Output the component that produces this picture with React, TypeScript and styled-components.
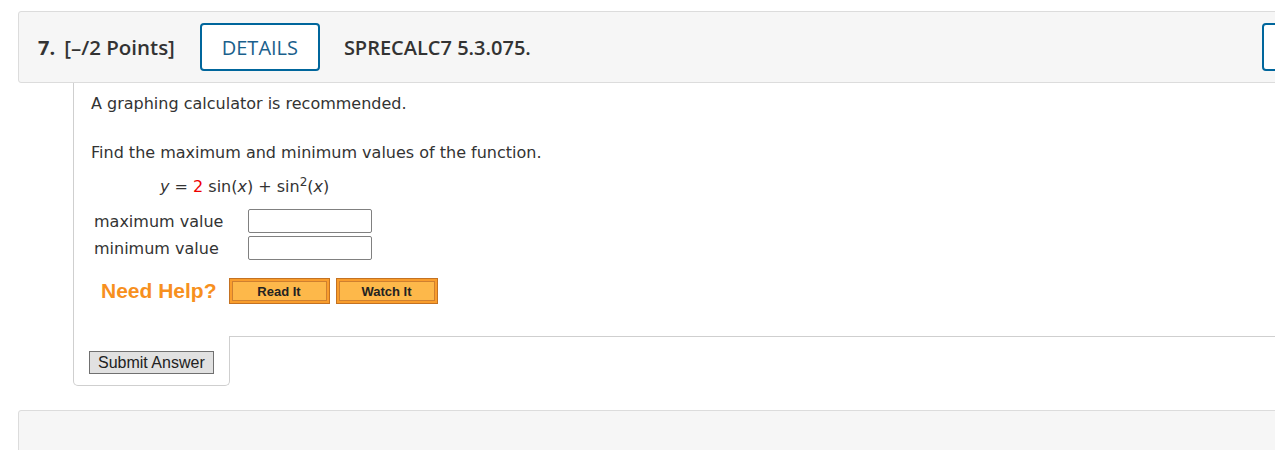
import React from 'react';
import styled, { createGlobalStyle } from 'styled-components';

const GlobalStyle = createGlobalStyle`
  html, body {
    margin: 0;
    padding: 0;
    background: #fff;
    overflow: hidden;
  }
`

const Page = styled.div`
  width: 1400px;
  padding: 11px 0 0 18px;
`

const QuestionHeader = styled.div`
  display: flex;
  align-items: center;
  height: 70px;
  padding-left: 19px;
  background: #f6f6f6;
  border: 1px solid #dcdcdc;
  border-radius: 3px;
  font-family: "Open Sans", sans-serif;
  color: #333;
`

const Number = styled.span`
  font-size: 20px;
  font-weight: 700;
  margin-right: 9px;
`

const Points = styled.span`
  font-size: 20.5px;
  font-weight: 600;
`

const DetailsButton = styled.button<{ $gap?: number; $end?: number }>`
  height: 48px;
  width: 120px;
  margin-left: ${p => p.$gap ?? 25}px;
  margin-right: ${p => p.$end ?? 0}px;
  background: #fff;
  border: 2px solid #00669c;
  border-radius: 4px;
  color: #1a5f8c;
  font-family: "Open Sans", sans-serif;
  font-size: 20px;
  padding: 0;
`

const Source = styled.span`
  margin-left: 24px;
  font-size: 20px;
  font-weight: 600;
`

const Spacer = styled.div`
  flex: 1;
`

const Body = styled.div`
  margin-left: 55px;
  font-family: "DejaVu Sans", Verdana, sans-serif;
  color: #333;
`

const Panel = styled.div`
  border-left: 1px solid #cfcfcf;
  padding: 10px 0 32px 17px;
`

const Para = styled.p<{ $top?: number }>`
  margin: ${p => p.$top ?? 0}px 0 0 0;
  font-size: 16px;
  line-height: 22px;
`

const Formula = styled.div`
  margin: 12px 0 0 69px;
  font-size: 16px;
  line-height: 22px;
  i { font-style: italic; }
  sup { font-size: 0.75em; line-height: 0; }
`

const Red = styled.span`
  color: #e00;
`

const AnswerGrid = styled.div`
  display: grid;
  grid-template-columns: 154px 124px;
  row-gap: 3px;
  margin: 11px 0 0 3px;
  align-items: center;
`

const Label = styled.label`
  font-size: 16px;
  line-height: 24px;
  position: relative;
  top: 1px;
`

const AnswerInput = styled.input`
  box-sizing: border-box;
  width: 124px;
  height: 24px;
  border: 1px solid #808080;
  border-radius: 2px;
  margin: 0;
`

const HelpRow = styled.div`
  display: flex;
  align-items: center;
  margin: 18px 0 0 10px;
`

const NeedHelp = styled.span`
  font-family: "Liberation Sans", Arial, sans-serif;
  font-weight: 700;
  font-size: 21px;
  color: #f7901e;
  margin-right: 12px;
`

const HelpButton = styled.button<{ $width: number }>`
  box-sizing: border-box;
  width: ${p => p.$width}px;
  height: 26px;
  margin-right: 6px;
  padding: 0;
  background: #fdb84a;
  border: 1px solid #c47222;
  box-shadow: inset 0 0 0 2px #f99d2c, inset 0 0 0 3px #cf8030;
  font-family: "Liberation Sans", Arial, sans-serif;
  font-weight: 700;
  font-size: 13px;
  color: #222;
`

const Footer = styled.div`
  display: flex;
  height: 50px;
`

const SubmitTab = styled.div`
  width: 157px;
  border: 1px solid #cfcfcf;
  border-top: none;
  border-radius: 0 0 5px 5px;
  padding: 15px 0 0 15px;
  box-sizing: border-box;
`

const SubmitButton = styled.button`
  height: 23px;
  padding: 0 8px;
  background: #e1e1e1;
  border: 1px solid #707070;
  font-family: "Liberation Sans", Arial, sans-serif;
  font-size: 16px;
  color: #222;
`

const Filler = styled.div`
  flex: 1;
  border-top: 1px solid #cfcfcf;
`

const NextQuestion = styled.div`
  margin-top: 24px;
  height: 60px;
  background: #f6f6f6;
  border: 1px solid #dcdcdc;
  border-radius: 3px;
`

export default function App() {
  return (
    <Page>
      <GlobalStyle />
      <QuestionHeader>
        <Number>7.</Number>
        <Points>[–/2 Points]</Points>
        <DetailsButton>DETAILS</DetailsButton>
        <Source>SPRECALC7 5.3.075.</Source>
        <Spacer />
        <DetailsButton $gap={0} $end={35} aria-label="My Notes" />
      </QuestionHeader>
      <Body>
        <Panel>
          <Para>A graphing calculator is recommended.</Para>
          <Para $top={27}>Find the maximum and minimum values of the function.</Para>
          <Formula>
            <i>y</i> = <Red>2</Red> sin(<i>x</i>) + sin<sup>2</sup>(<i>x</i>)
          </Formula>
          <AnswerGrid>
            <Label>maximum value</Label>
            <AnswerInput />
            <Label>minimum value</Label>
            <AnswerInput />
          </AnswerGrid>
          <HelpRow>
            <NeedHelp>Need Help?</NeedHelp>
            <HelpButton $width={101}>Read It</HelpButton>
            <HelpButton $width={102}>Watch It</HelpButton>
          </HelpRow>
        </Panel>
        <Footer>
          <SubmitTab>
            <SubmitButton>Submit Answer</SubmitButton>
          </SubmitTab>
          <Filler />
        </Footer>
      </Body>
      <NextQuestion />
    </Page>
  );
}
